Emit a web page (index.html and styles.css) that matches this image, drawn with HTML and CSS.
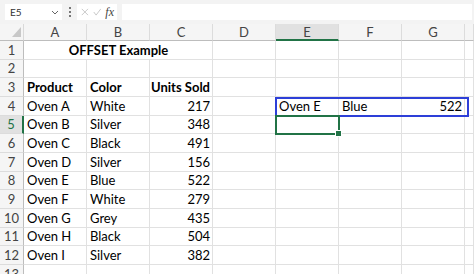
FILE: index.html
```html
<!DOCTYPE html>
<html lang="en">
<head>
    <meta charset="UTF-8">
    <title>OFFSET Example</title>
    <link rel="stylesheet" href="styles.css">
</head>
<body>
    <div class="toolbar">
        <div class="name-box">
            <span>E5</span>
            <svg class="chevron" width="8" height="5" viewBox="0 0 8 5"><path d="M1 1l3 3 3-3" fill="none" stroke="#666" stroke-width="1"/></svg>
        </div>
        <div class="dots">
            <i></i><i></i><i></i>
        </div>
        <div class="fx-box">
            <svg width="10" height="10" viewBox="0 0 10 10"><path d="M1 1l8 8M9 1l-8 8" stroke="#bbb" stroke-width="1"/></svg>
            <svg width="11" height="10" viewBox="0 0 11 10"><path d="M1 5l3 4 6-8" fill="none" stroke="#bbb" stroke-width="1"/></svg>
            <span class="fx">fx</span>
        </div>
        <div class="formula"></div>
    </div>

    <div class="sheet">
        <div class="corner"><svg width="9" height="10" viewBox="0 0 9 10"><path d="M9 0v10H0z" fill="#c8c8c8"/></svg></div>
        <div class="col-head">A</div>
        <div class="col-head">B</div>
        <div class="col-head">C</div>
        <div class="col-head">D</div>
        <div class="col-head active">E</div>
        <div class="col-head">F</div>
        <div class="col-head">G</div>
        <div class="col-head"></div>

        <div class="row-head">1</div>
        <div class="cell title">OFFSET Example</div>
        <div class="cell"></div><div class="cell"></div><div class="cell"></div><div class="cell"></div><div class="cell"></div>

        <div class="row-head">2</div>
        <div class="cell"></div><div class="cell"></div><div class="cell"></div><div class="cell"></div><div class="cell"></div><div class="cell"></div><div class="cell"></div><div class="cell"></div>

        <div class="row-head">3</div>
        <div class="cell bold">Product</div><div class="cell bold">Color</div><div class="cell bold num">Units Sold</div><div class="cell"></div><div class="cell"></div><div class="cell"></div><div class="cell"></div><div class="cell"></div>

        <div class="row-head">4</div>
        <div class="cell">Oven A</div><div class="cell">White</div><div class="cell num">217</div><div class="cell"></div><div class="cell">Oven E</div><div class="cell">Blue</div><div class="cell num">522</div><div class="cell"></div>

        <div class="row-head active">5</div>
        <div class="cell">Oven B</div><div class="cell">Silver</div><div class="cell num">348</div><div class="cell"></div><div class="cell"></div><div class="cell"></div><div class="cell"></div><div class="cell"></div>

        <div class="row-head">6</div>
        <div class="cell">Oven C</div><div class="cell">Black</div><div class="cell num">491</div><div class="cell"></div><div class="cell"></div><div class="cell"></div><div class="cell"></div><div class="cell"></div>

        <div class="row-head">7</div>
        <div class="cell">Oven D</div><div class="cell">Silver</div><div class="cell num">156</div><div class="cell"></div><div class="cell"></div><div class="cell"></div><div class="cell"></div><div class="cell"></div>

        <div class="row-head">8</div>
        <div class="cell">Oven E</div><div class="cell">Blue</div><div class="cell num">522</div><div class="cell"></div><div class="cell"></div><div class="cell"></div><div class="cell"></div><div class="cell"></div>

        <div class="row-head">9</div>
        <div class="cell">Oven F</div><div class="cell">White</div><div class="cell num">279</div><div class="cell"></div><div class="cell"></div><div class="cell"></div><div class="cell"></div><div class="cell"></div>

        <div class="row-head">10</div>
        <div class="cell">Oven G</div><div class="cell">Grey</div><div class="cell num">435</div><div class="cell"></div><div class="cell"></div><div class="cell"></div><div class="cell"></div><div class="cell"></div>

        <div class="row-head">11</div>
        <div class="cell">Oven H</div><div class="cell">Black</div><div class="cell num">504</div><div class="cell"></div><div class="cell"></div><div class="cell"></div><div class="cell"></div><div class="cell"></div>

        <div class="row-head">12</div>
        <div class="cell">Oven I</div><div class="cell">Silver</div><div class="cell num">382</div><div class="cell"></div><div class="cell"></div><div class="cell"></div><div class="cell"></div><div class="cell"></div>

        <div class="row-head">13</div>
        <div class="cell"></div><div class="cell"></div><div class="cell"></div><div class="cell"></div><div class="cell"></div><div class="cell"></div><div class="cell"></div><div class="cell"></div>

        <!-- selection overlays -->
        <div class="range-box"></div>
        <div class="active-cell"><i></i></div>
    </div>
</body>
</html>
```

FILE: styles.css
```css
body {
    margin: 0;
    padding: 0;
    width: 474px;
    height: 274px;
    overflow: hidden;
    background: #fff;
    font-family: Lato, "Liberation Sans", sans-serif;
    color: #000;
}

.toolbar {
    display: flex;
    align-items: center;
    height: 24px;
    padding: 0 2px 0 5px;
    background: #f3f3f3;
    box-sizing: border-box;
}

.name-box {
    display: flex;
    align-items: center;
    justify-content: space-between;
    width: 57px;
    height: 16px;
    padding: 0 3px 0 5px;
    box-sizing: border-box;
    background: #fff;
    font-size: 10px;
    color: #333;
}

.dots {
    display: flex;
    flex-direction: column;
    gap: 2px;
    width: 15px;
    align-items: center;
}

.dots i {
    width: 2px;
    height: 2px;
    background: #777;
}

.fx-box {
    display: flex;
    align-items: center;
    gap: 4px;
    width: 40px;
    height: 16px;
    padding: 0 3px 0 4px;
    box-sizing: border-box;
    background: #fff;
}

.fx {
    font-family: "Liberation Serif", serif;
    font-style: italic;
    font-size: 12px;
    color: #444;
}

.formula {
    flex: 1;
    height: 16px;
    margin-left: 5px;
    background: #fff;
}

.sheet {
    position: relative;
    display: grid;
    grid-template-columns: 24px repeat(7, 63px) 1fr;
    grid-template-rows: 17px repeat(13, 18.67px);
}

.corner,
.col-head,
.row-head {
    background: #f5f5f5;
    color: #444;
    font-size: 13px;
    display: flex;
    align-items: center;
    justify-content: center;
    box-sizing: border-box;
}

.corner {
    justify-content: flex-end;
    align-items: flex-end;
    padding: 0 2px 3px 0;
    border-right: 1px solid #d9d9d9;
    border-bottom: 1px solid #bdbdbd;
}

.col-head {
    border-right: 1px solid #dcdcdc;
    border-bottom: 1px solid #bdbdbd;
}

.col-head.active {
    background: #e1e1e1;
    border-bottom: 2px solid #217346;
}

.row-head {
    border-right: 1px solid #bdbdbd;
    border-bottom: 1px solid #dcdcdc;
}

.row-head.active {
    background: #e1e1e1;
    border-right: 2px solid #217346;
    color: #217346;
}

.cell {
    display: flex;
    align-items: center;
    padding: 0 2px 0 3px;
    box-sizing: border-box;
    border-right: 1px solid #e1e1e1;
    border-bottom: 1px solid #e1e1e1;
    font-size: 13px;
    white-space: nowrap;
    overflow: hidden;
}

.cell.title {
    grid-column: span 3;
    justify-content: center;
    font-weight: bold;
}

.cell.bold {
    font-weight: bold;
}

.cell.num {
    justify-content: flex-end;
}

.range-box {
    position: absolute;
    left: 275px;
    top: 73px;
    width: 194px;
    height: 20px;
    border: 2px solid #2d3fd8;
    box-sizing: border-box;
}

.active-cell {
    position: absolute;
    left: 275px;
    top: 91px;
    width: 65px;
    height: 20px;
    border: 2px solid #217346;
    box-sizing: border-box;
}

.active-cell i {
    position: absolute;
    right: -4px;
    bottom: -4px;
    width: 5px;
    height: 5px;
    background: #217346;
    border: 1px solid #fff;
}
```
